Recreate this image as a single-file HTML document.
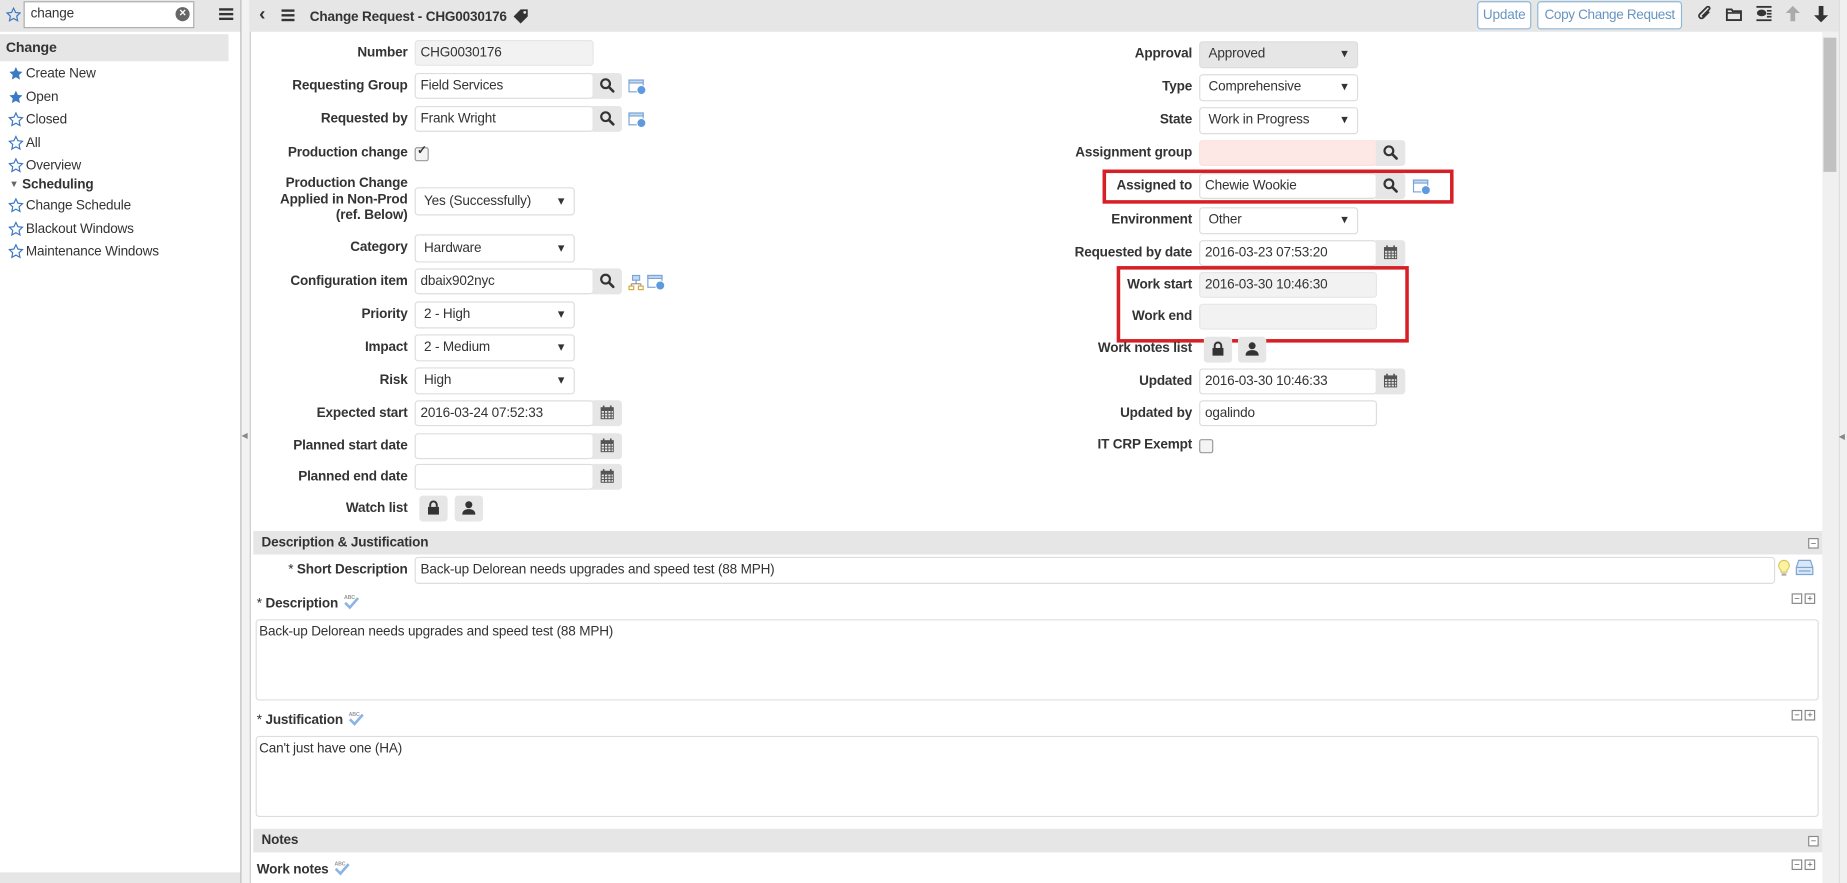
<!DOCTYPE html>
<html><head><meta charset="utf-8"><style>
html,body{margin:0;padding:0;width:1847px;height:883px;overflow:hidden;background:#fff}
#w{position:absolute;left:0;top:0;width:1568px;height:750px;transform:scale(1.17793,1.1773);transform-origin:0 0;font-family:"Liberation Sans",Arial,sans-serif;font-size:11.5px;letter-spacing:-0.15px;color:#333}
.a{position:absolute;white-space:nowrap}
.l{position:absolute;font-weight:bold;text-align:right;line-height:14px;color:#333;white-space:nowrap}
.i{position:absolute;box-sizing:border-box;height:22px;border:1px solid #ddd;border-radius:3px;background:#fff;line-height:20px;padding-left:4px;white-space:nowrap;color:#333}
.ro{background:#f2f2f2;border-color:#e6e6e6}
.s::after{content:"\25BE";position:absolute;right:8px;top:0;font-size:11px;color:#333}
.s{padding-left:7px}
.b{position:absolute;box-sizing:border-box;height:22px;width:25px;background:#e6e6e6;border-radius:0 3px 3px 0}
.b svg{position:absolute;left:6px;top:4px}
.wb{position:absolute;width:24px;height:22px;background:#e6e6e6;border-radius:3px}
.wb svg{position:absolute;left:6px;top:4px}
.nav{position:absolute;left:8px;line-height:14px;color:#333}
.nav svg{position:absolute;left:-1px;top:0}
.nav span{position:absolute;left:14px;white-space:nowrap}
.cb{position:absolute;width:10px;height:10px;border:1px solid #999;border-radius:2px;background:#f4f4f4}
.sec{position:absolute;left:215px;width:1332px;height:20px;background:#e6e6e6;font-weight:bold;line-height:20px;padding-left:7px;box-sizing:border-box}
.mini{position:absolute;width:7px;height:7px;border:1px solid #888;font-size:8px;line-height:7px;text-align:center;color:#555;background:#fff}
.red{position:absolute;border:3px solid #d71f26;box-sizing:border-box}
.ic{display:inline-block;vertical-align:-2px;margin-left:4px}
</style></head><body><div id="w">
<svg width="0" height="0" style="position:absolute"><defs>
<symbol id="mag" viewBox="0 0 14 14"><circle cx="5.5" cy="5.5" r="4" fill="none" stroke="#333" stroke-width="2"/><path d="M8.5 8.5L12.5 12.5" stroke="#333" stroke-width="2.4" stroke-linecap="round"/></symbol>
<symbol id="cal" viewBox="0 0 14 14"><rect x="1" y="2" width="12" height="11" fill="#555"/><rect x="3" y="0.5" width="1.5" height="3" fill="#555"/><rect x="9.5" y="0.5" width="1.5" height="3" fill="#555"/><g fill="#e6e6e6"><rect x="2" y="5.5" width="2" height="1.6"/><rect x="5" y="5.5" width="2" height="1.6"/><rect x="8" y="5.5" width="2" height="1.6"/><rect x="11" y="5.5" width="1.2" height="1.6"/><rect x="2" y="8" width="2" height="1.6"/><rect x="5" y="8" width="2" height="1.6"/><rect x="8" y="8" width="2" height="1.6"/><rect x="11" y="8" width="1.2" height="1.6"/><rect x="2" y="10.5" width="2" height="1.6"/><rect x="5" y="10.5" width="2" height="1.6"/><rect x="8" y="10.5" width="2" height="1.6"/><rect x="11" y="10.5" width="1.2" height="1.6"/></g></symbol>
<symbol id="lock" viewBox="0 0 12 14"><path d="M3 6V4a3 3 0 0 1 6 0v2" fill="none" stroke="#333" stroke-width="1.8"/><rect x="1" y="6" width="10" height="7" fill="#333"/></symbol>
<symbol id="user" viewBox="0 0 12 14"><circle cx="6" cy="4" r="3.2" fill="#333"/><path d="M0 13c0-4 3-5 6-5s6 1 6 5z" fill="#333"/></symbol>
<symbol id="so" viewBox="0 0 14 14"><path d="M7 1l1.8 3.9 4.2.5-3.1 2.9.8 4.2L7 10.4 3.3 12.5l.8-4.2L1 5.4l4.2-.5z" fill="none" stroke="#3c7ac3" stroke-width="1.1"/></symbol>
<symbol id="sf" viewBox="0 0 14 14"><path d="M7 1l1.8 3.9 4.2.5-3.1 2.9.8 4.2L7 10.4 3.3 12.5l.8-4.2L1 5.4l4.2-.5z" fill="#3c7ac3"/></symbol>
<symbol id="pv" viewBox="0 0 16 14"><rect x="1" y="1" width="12" height="10" fill="#fff" stroke="#7aa5d6"/><rect x="1" y="1" width="12" height="2.5" fill="#c5d9ef" stroke="#7aa5d6"/><circle cx="11.5" cy="9.5" r="3.8" fill="#5d9ae0" stroke="#fff" stroke-width=".8"/></symbol>
<symbol id="abc" viewBox="0 0 14 14"><text x="1" y="5" font-size="4.5" fill="#999" font-family="Liberation Sans">ABC</text><path d="M2 8l4 4 7-8" fill="none" stroke="#8ab4e6" stroke-width="2.2"/></symbol>
</defs></svg>

<!-- left nav -->
<div class="a" style="left:0;top:0;width:205px;height:27px;background:#e6e6e6"></div>
<svg class="a" style="left:5px;top:6px" width="13" height="13"><use href="#so"/></svg>
<div class="i" style="left:20px;top:1px;width:145px;height:23px;border-color:#aaa;border-radius:0;padding-left:5px;line-height:21px">change</div>
<div class="a" style="left:149px;top:6px;width:12px;height:12px;border-radius:50%;background:#666;color:#fff;font-size:10px;line-height:12px;text-align:center;font-weight:bold">×</div>
<div class="a" style="left:186px;top:7px;width:12px;height:2px;background:#333;box-shadow:0 4px 0 #333,0 8px 0 #333"></div>
<div class="a" style="left:0;top:29px;width:194px;height:23px;background:#e6e6e6;font-weight:bold;font-size:12px;line-height:23px;padding-left:5px;box-sizing:border-box">Change</div>
<div class="nav" style="top:56px"><svg width="13" height="13"><use href="#sf"/></svg><span>Create New</span></div>
<div class="nav" style="top:76px"><svg width="13" height="13"><use href="#sf"/></svg><span>Open</span></div>
<div class="nav" style="top:95px"><svg width="13" height="13"><use href="#so"/></svg><span>Closed</span></div>
<div class="nav" style="top:115px"><svg width="13" height="13"><use href="#so"/></svg><span>All</span></div>
<div class="nav" style="top:134px"><svg width="13" height="13"><use href="#so"/></svg><span>Overview</span></div>
<div class="a" style="left:8px;top:150px;font-weight:bold;line-height:14px"><span style="font-size:8px;color:#666;position:relative;top:-1px">▼</span> Scheduling</div>
<div class="nav" style="top:168px"><svg width="13" height="13"><use href="#so"/></svg><span>Change Schedule</span></div>
<div class="nav" style="top:188px"><svg width="13" height="13"><use href="#so"/></svg><span>Blackout Windows</span></div>
<div class="nav" style="top:207px"><svg width="13" height="13"><use href="#so"/></svg><span>Maintenance Windows</span></div>
<div class="a" style="left:0;top:741px;width:204px;height:9px;background:#e6e6e6"></div>
<!-- splitter -->
<div class="a" style="left:204px;top:0;width:7px;height:750px;background:#f2f2f2;border-left:1px solid #bbb;border-right:1px solid #ccc"></div>
<div class="a" style="left:205px;top:366px;font-size:7px;color:#888">◀</div>

<!-- header -->
<div class="a" style="left:212px;top:0;width:1356px;height:27px;background:#e6e6e6"></div>
<div class="a" style="left:220px;top:4px;font-size:16px;font-weight:bold;color:#333">‹</div>
<div class="a" style="left:239px;top:8px;width:11px;height:2px;background:#333;box-shadow:0 4px 0 #333,0 8px 0 #333"></div>
<div class="a" style="left:263px;top:7px;font-weight:bold">Change Request - CHG0030176<svg class="ic" style="margin-left:6px" width="13" height="13" viewBox="0 0 13 13"><path d="M6 1h6v6l-6 6-6-6z" fill="#333"/><circle cx="9.5" cy="3.5" r="1.2" fill="#e6e6e6"/></svg></div>
<div class="a" style="left:1254px;top:1px;width:46px;height:24px;box-sizing:border-box;border:1px solid #8fb7d6;border-radius:3px;background:#fff;color:#6895c0;text-align:center;line-height:22px">Update</div>
<div class="a" style="left:1305px;top:1px;width:123px;height:24px;box-sizing:border-box;border:1px solid #8fb7d6;border-radius:3px;background:#fff;color:#6895c0;text-align:center;line-height:22px;letter-spacing:-0.3px">Copy Change Request</div>
<svg class="a" style="left:1440px;top:5px" width="14" height="14" viewBox="0 0 14 14"><path d="M11 5L6 10a2 2 0 0 1-3-3l6-6a1.3 1.3 0 0 1 2 2L5 9" fill="none" stroke="#333" stroke-width="1.5"/></svg>
<svg class="a" style="left:1465px;top:6px" width="14" height="12" viewBox="0 0 14 12"><path d="M1 2h4l1 1.5h7V11H1z" fill="none" stroke="#333" stroke-width="1.6"/><path d="M1 5h12" stroke="#333" stroke-width="1.4"/></svg>
<svg class="a" style="left:1491px;top:5px" width="13" height="13" viewBox="0 0 13 13"><rect x="0" y="0" width="13" height="1.6" fill="#333"/><rect x="0" y="11.4" width="13" height="1.6" fill="#333"/><ellipse cx="4.5" cy="6" rx="4" ry="2.8" fill="#333"/><rect x="9" y="3.5" width="4" height="1.4" fill="#333"/><rect x="9" y="6" width="4" height="1.4" fill="#333"/><rect x="9" y="8.5" width="4" height="1.4" fill="#333"/></svg>
<svg class="a" style="left:1516px;top:5px" width="12" height="14" viewBox="0 0 12 14"><path d="M6 0L0 6h4v7h4V6h4z" fill="#aaa"/></svg>
<svg class="a" style="left:1540px;top:5px" width="12" height="14" viewBox="0 0 12 14"><path d="M6 14L0 8h4V0h4v8h4z" fill="#333"/></svg>
<!-- scrollbar -->
<div class="a" style="left:1547px;top:27px;width:14px;height:723px;background:#f0f0f0"></div>
<div class="a" style="left:1548px;top:32px;width:11px;height:114px;background:#c1c1c1"></div>
<div class="a" style="left:1561px;top:0;width:7px;height:750px;background:#f0f0f0;border-left:1px solid #ddd"></div>
<div class="a" style="left:1561px;top:367px;font-size:7px;color:#888">◀</div>

<!-- left column -->
<div class="l" style="left:212px;width:134px;top:38px">Number</div>
<div class="i ro" style="left:352px;top:34px;width:152px">CHG0030176</div>
<div class="l" style="left:212px;width:134px;top:66px">Requesting Group</div>
<div class="i" style="left:352px;top:62px;width:152px">Field Services</div><div class="b" style="left:503px;top:62px"><svg width="13" height="13"><use href="#mag"/></svg></div>
<svg class="a" style="left:533px;top:67px" width="16" height="14"><use href="#pv"/></svg>
<div class="l" style="left:212px;width:134px;top:94px">Requested by</div>
<div class="i" style="left:352px;top:90px;width:152px">Frank Wright</div><div class="b" style="left:503px;top:90px"><svg width="13" height="13"><use href="#mag"/></svg></div>
<svg class="a" style="left:533px;top:95px" width="16" height="14"><use href="#pv"/></svg>
<div class="l" style="left:212px;width:134px;top:123px">Production change</div>
<div class="cb" style="left:352px;top:125px"><span style="position:absolute;left:1px;top:-3px;font-size:10px;font-weight:bold">✓</span></div>
<div class="l" style="left:212px;width:134px;top:150px;line-height:13.5px">Production Change<br>Applied in Non-Prod<br>(ref. Below)</div>
<div class="i s" style="left:352px;top:159px;width:136px;height:24px;line-height:22px">Yes (Successfully)</div>
<div class="l" style="left:212px;width:134px;top:203px">Category</div>
<div class="i s" style="left:352px;top:199px;width:136px;height:24px;line-height:22px">Hardware</div>
<div class="l" style="left:212px;width:134px;top:232px">Configuration item</div>
<div class="i" style="left:352px;top:228px;width:152px">dbaix902nyc</div><div class="b" style="left:503px;top:228px"><svg width="13" height="13"><use href="#mag"/></svg></div>
<svg class="a" style="left:533px;top:233px" width="14" height="14" viewBox="0 0 14 14"><rect x="4" y="1" width="6" height="4" fill="#c5d9ef" stroke="#7aa5d6"/><path d="M7 5v3M3 8h8M3 8v2M11 8v2" stroke="#999" fill="none"/><rect x="1" y="10" width="4" height="3" fill="#fff" stroke="#d4a93a"/><rect x="9" y="10" width="4" height="3" fill="#fff" stroke="#d4a93a"/></svg>
<svg class="a" style="left:549px;top:233px" width="16" height="14"><use href="#pv"/></svg>
<div class="l" style="left:212px;width:134px;top:260px">Priority</div>
<div class="i s" style="left:352px;top:256px;width:136px;height:23px">2 - High</div>
<div class="l" style="left:212px;width:134px;top:288px">Impact</div>
<div class="i s" style="left:352px;top:284px;width:136px;height:23px">2 - Medium</div>
<div class="l" style="left:212px;width:134px;top:316px">Risk</div>
<div class="i s" style="left:352px;top:312px;width:136px;height:23px">High</div>
<div class="l" style="left:212px;width:134px;top:344px">Expected start</div>
<div class="i" style="left:352px;top:340px;width:152px">2016-03-24 07:52:33</div><div class="b" style="left:503px;top:340px"><svg width="13" height="13"><use href="#cal"/></svg></div>
<div class="l" style="left:212px;width:134px;top:372px">Planned start date</div>
<div class="i" style="left:352px;top:368px;width:152px"></div><div class="b" style="left:503px;top:368px"><svg width="13" height="13"><use href="#cal"/></svg></div>
<div class="l" style="left:212px;width:134px;top:398px">Planned end date</div>
<div class="i" style="left:352px;top:394px;width:152px"></div><div class="b" style="left:503px;top:394px"><svg width="13" height="13"><use href="#cal"/></svg></div>
<div class="l" style="left:212px;width:134px;top:425px">Watch list</div>
<div class="wb" style="left:356px;top:421px"><svg width="12" height="13"><use href="#lock"/></svg></div>
<div class="wb" style="left:386px;top:421px"><svg width="12" height="13"><use href="#user"/></svg></div>

<!-- right column -->
<div class="l" style="left:700px;width:312px;top:39px">Approval</div>
<div class="i s" style="left:1018px;top:35px;width:135px;height:23px;background:#e6e6e6;border-color:#ddd">Approved</div>
<div class="l" style="left:700px;width:312px;top:67px">Type</div>
<div class="i s" style="left:1018px;top:63px;width:135px;height:23px">Comprehensive</div>
<div class="l" style="left:700px;width:312px;top:95px">State</div>
<div class="i s" style="left:1018px;top:91px;width:135px;height:23px">Work in Progress</div>
<div class="l" style="left:700px;width:312px;top:123px">Assignment group</div>
<div class="i" style="left:1018px;top:119px;width:151px;background:#fde8e6;border-color:#fde0dc"></div><div class="b" style="left:1168px;top:119px"><svg width="13" height="13"><use href="#mag"/></svg></div>
<div class="l" style="left:700px;width:312px;top:151px">Assigned to</div>
<div class="i" style="left:1018px;top:147px;width:151px">Chewie Wookie</div><div class="b" style="left:1168px;top:147px"><svg width="13" height="13"><use href="#mag"/></svg></div>
<svg class="a" style="left:1199px;top:152px" width="16" height="14"><use href="#pv"/></svg>
<div class="red" style="left:936px;top:144px;width:298px;height:29px"></div>
<div class="l" style="left:700px;width:312px;top:180px">Environment</div>
<div class="i s" style="left:1018px;top:176px;width:135px;height:23px">Other</div>
<div class="l" style="left:700px;width:312px;top:208px">Requested by date</div>
<div class="i" style="left:1018px;top:204px;width:151px">2016-03-23 07:53:20</div><div class="b" style="left:1168px;top:204px"><svg width="13" height="13"><use href="#cal"/></svg></div>
<div class="l" style="left:700px;width:312px;top:235px">Work start</div>
<div class="i ro" style="left:1018px;top:231px;width:151px">2016-03-30 10:46:30</div>
<div class="l" style="left:700px;width:312px;top:262px">Work end</div>
<div class="i ro" style="left:1018px;top:258px;width:151px"></div>
<div class="red" style="left:948px;top:226px;width:248px;height:65px"></div>
<div class="l" style="left:700px;width:312px;top:289px">Work notes list</div>
<div class="wb" style="left:1022px;top:286px"><svg width="12" height="13"><use href="#lock"/></svg></div>
<div class="wb" style="left:1051px;top:286px"><svg width="12" height="13"><use href="#user"/></svg></div>
<div class="l" style="left:700px;width:312px;top:317px">Updated</div>
<div class="i" style="left:1018px;top:313px;width:151px">2016-03-30 10:46:33</div><div class="b" style="left:1168px;top:313px"><svg width="13" height="13"><use href="#cal"/></svg></div>
<div class="l" style="left:700px;width:312px;top:344px">Updated by</div>
<div class="i" style="left:1018px;top:340px;width:151px">ogalindo</div>
<div class="l" style="left:700px;width:312px;top:371px">IT CRP Exempt</div>
<div class="cb" style="left:1018px;top:373px"></div>

<!-- Description section -->
<div class="sec" style="top:451px">Description &amp; Justification</div>
<div class="mini" style="left:1535px;top:457px">−</div>
<div class="l" style="left:212px;width:134px;top:477px"><span style="font-weight:normal">*</span> Short Description</div>
<div class="i" style="left:352px;top:473px;width:1155px;height:23px">Back-up Delorean needs upgrades and speed test (88 MPH)</div>
<svg class="a" style="left:1509px;top:475px" width="11" height="15" viewBox="0 0 11 15"><path d="M5.5 1a4.5 4.5 0 0 0-2.5 8.2V11h5V9.2A4.5 4.5 0 0 0 5.5 1z" fill="#fbf3a0" stroke="#d9c65a"/><rect x="3.5" y="12" width="4" height="2" fill="#aaa"/></svg>
<svg class="a" style="left:1524px;top:475px" width="16" height="14" viewBox="0 0 16 14"><path d="M3 1h10l2 6v6H1V7z" fill="#dbe7f5" stroke="#7aa5d6"/><path d="M1 7h14M3 10h10" stroke="#7aa5d6"/></svg>
<div class="a" style="left:218px;top:504px;font-weight:bold"><span style="font-weight:normal">*</span> Description<svg class="ic" width="14" height="14"><use href="#abc"/></svg></div>
<div class="mini" style="left:1521px;top:504px">−</div><div class="mini" style="left:1532px;top:504px">+</div>
<div class="i" style="left:217px;top:526px;width:1327px;height:69px;line-height:18px;padding:1px 2px">Back-up Delorean needs upgrades and speed test (88 MPH)</div>
<div class="a" style="left:218px;top:603px;font-weight:bold"><span style="font-weight:normal">*</span> Justification<svg class="ic" width="14" height="14"><use href="#abc"/></svg></div>
<div class="mini" style="left:1521px;top:603px">−</div><div class="mini" style="left:1532px;top:603px">+</div>
<div class="i" style="left:217px;top:625px;width:1327px;height:69px;line-height:18px;padding:1px 2px">Can't just have one (HA)</div>
<div class="sec" style="top:704px">Notes</div>
<div class="mini" style="left:1535px;top:710px">−</div>
<div class="a" style="left:218px;top:730px;font-weight:bold">Work notes<svg class="ic" width="14" height="14"><use href="#abc"/></svg></div>
<div class="mini" style="left:1521px;top:730px">−</div><div class="mini" style="left:1532px;top:730px">+</div>
</div></body></html>
